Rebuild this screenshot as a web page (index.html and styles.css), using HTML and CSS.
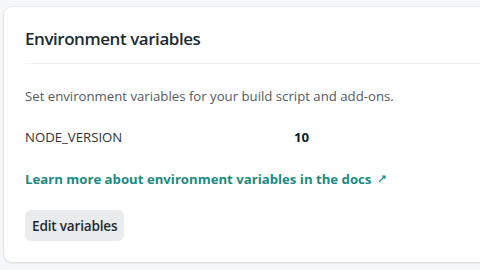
FILE: index.html
```html
<!DOCTYPE html>
<html>
<head>
<meta charset="utf-8">
<link rel="stylesheet" href="styles.css">
</head>
<body>
<section class="card">
  <header class="card-header">
    <h2 class="title">Environment variables</h2>
  </header>
  <div class="card-body">
    <p class="desc">Set environment variables for your build script and add-ons.</p>
    <dl class="vars">
      <dt class="var-key">NODE_VERSION</dt>
      <dd class="var-value">10</dd>
    </dl>
    <a class="doc-link" href="#">Learn more about environment variables in the docs <svg class="ext" width="10" height="10" viewBox="0 0 10 10"><path d="M2 8 L8 2 M5 2 H8 V5" fill="none" stroke="currentColor" stroke-width="1.2"/></svg></a>
    <button class="btn">Edit variables</button>
  </div>
</section>
</body>
</html>
```
FILE: styles.css
```css
html, body { margin: 0; padding: 0; }
body {
  background: #f5f7f8;
  font-family: "Open Sans", "Noto Sans", sans-serif;
  width: 480px;
  height: 270px;
  overflow: hidden;
  padding: 7px 0 0 4px;
  box-sizing: border-box;
}
.card {
  background: #fff;
  border-radius: 8px 0 0 8px;
  box-shadow: 0 0 0 1px rgba(14,30,37,0.04), 0 1px 3px rgba(14,30,37,0.10);
  width: 490px;
  height: 255px;
  padding: 0 0 0 21px;
  box-sizing: border-box;
}
.card-header {
  border-bottom: 1px solid #eef0f1;
  padding: 20px 0 12px;
}
.title {
  margin: 0;
  font-size: 17px;
  font-weight: 600;
  letter-spacing: -0.45px;
  color: #1d2b31;
  line-height: 24px;
}
.card-body { padding-top: 22px; }
.desc {
  margin: 0;
  font-size: 13.2px;
  color: #545a61;
  line-height: 20px;
}
.vars {
  display: flex;
  margin: 21px 0 0;
  font-size: 13.2px;
  line-height: 20px;
}
.var-key { width: 269px; color: #2c3236; }
.var-value { margin: 0; font-weight: 700; color: #0e1e25; }
.doc-link {
  display: inline-flex;
  align-items: center;
  gap: 6px;
  margin-top: 22px;
  font-size: 13.2px;
  font-weight: 700;
  color: #1b8a80;
  text-decoration: none;
  line-height: 20px;
}
.ext { color: #1b8a80; }
.btn {
  display: block;
  margin-top: 21px;
  font-family: inherit;
  font-size: 13.6px;
  font-weight: 600;
  letter-spacing: -0.2px;
  color: #1d2b31;
  background: #e9ebed;
  border: none;
  border-radius: 6px;
  padding: 6px 7px;
  line-height: 19px;
  height: 31px;
}
```
